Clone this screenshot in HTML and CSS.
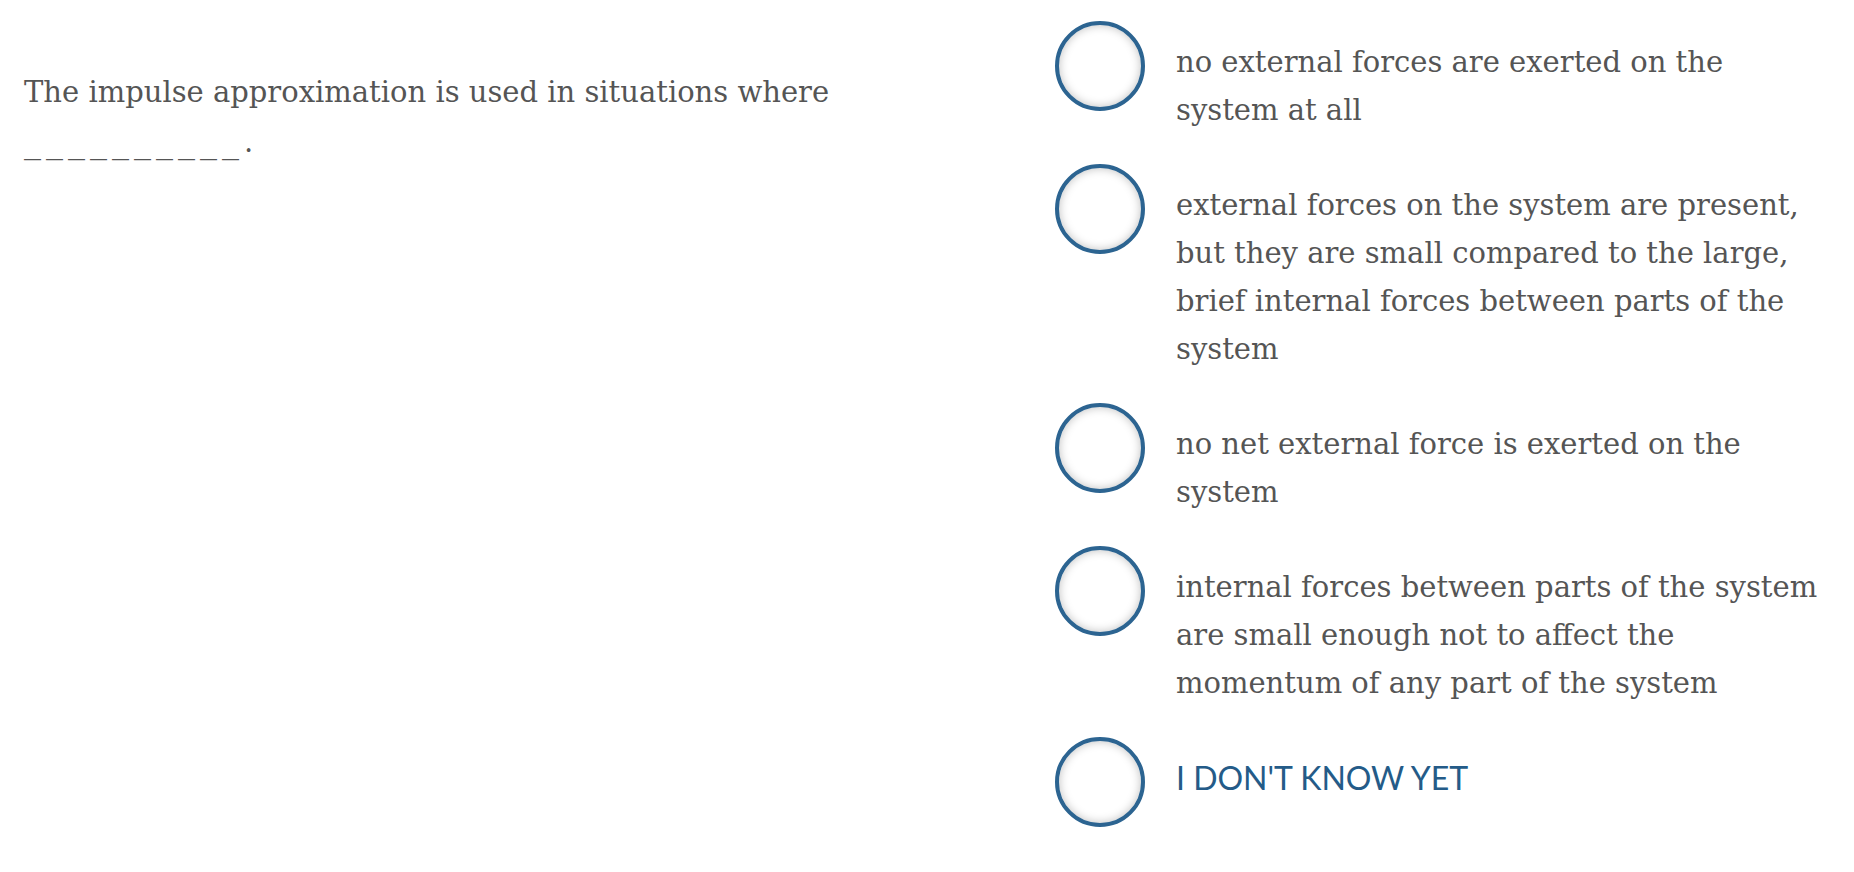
FILE: index.html
```html
<!DOCTYPE html>
<html lang="en">
  <head>
    <meta charset="UTF-8" />
    <meta name="viewport" content="width=device-width, initial-scale=1.0" />
    <title>Question</title>
    <link rel="stylesheet" href="styles.css">
  </head>
  <body>
    <div class="question-page">
      <div class="question-stem">
        <p class="question-text">
          The impulse approximation is used in situations where
          <span class="blank">__________</span>.
        </p>
      </div>

      <ul class="answer-list">
        <li class="answer">
          <span class="answer-radio"></span>
          <span class="answer-text">no external forces are exerted on the system at all</span>
        </li>
        <li class="answer">
          <span class="answer-radio"></span>
          <span class="answer-text">external forces on the system are present, but they are small compared to the large, brief internal forces between parts of the system</span>
        </li>
        <li class="answer">
          <span class="answer-radio"></span>
          <span class="answer-text">no net external force is exerted on the system</span>
        </li>
        <li class="answer">
          <span class="answer-radio"></span>
          <span class="answer-text">internal forces between parts of the system are small enough not to affect the momentum of any part of the system</span>
        </li>
        <li class="answer">
          <span class="answer-radio"></span>
          <span class="answer-text answer-unknown">I DON'T KNOW YET</span>
        </li>
      </ul>
    </div>
  </body>
</html>
```

FILE: styles.css
```css
/* reset */
* {
  margin: 0;
  padding: 0;
  box-sizing: border-box;
}

body {
  background-color: #fff;
  font-family: "DejaVu Serif", "Liberation Serif", serif;
  color: #555;
}

.question-page {
  display: grid;
  grid-template-columns: 1055px 1fr;
  padding-top: 21px;
}

.question-stem {
  padding: 47px 40px 0 24px;
}

.question-text {
  font-size: 29px;
  line-height: 48px;
  max-width: 960px;
}

.blank {
  font-size: 34px;
  letter-spacing: 5px;
}

.answer-list {
  list-style: none;
}

.answer {
  display: flex;
  gap: 31px;
  padding-bottom: 30px;
}

.answer-radio {
  flex: none;
  width: 90px;
  height: 90px;
  border: 4px solid #2c6491;
  border-radius: 50%;
  background-color: #fff;
  box-shadow: inset 0 0 10px rgba(0, 0, 0, 0.25);
}

.answer-text {
  width: 650px;
  padding-top: 17px;
  font-size: 29px;
  line-height: 48px;
}

.answer-unknown {
  font-family: Lato, "Open Sans", sans-serif;
  font-size: 32px;
  color: #245b88;
}
```
